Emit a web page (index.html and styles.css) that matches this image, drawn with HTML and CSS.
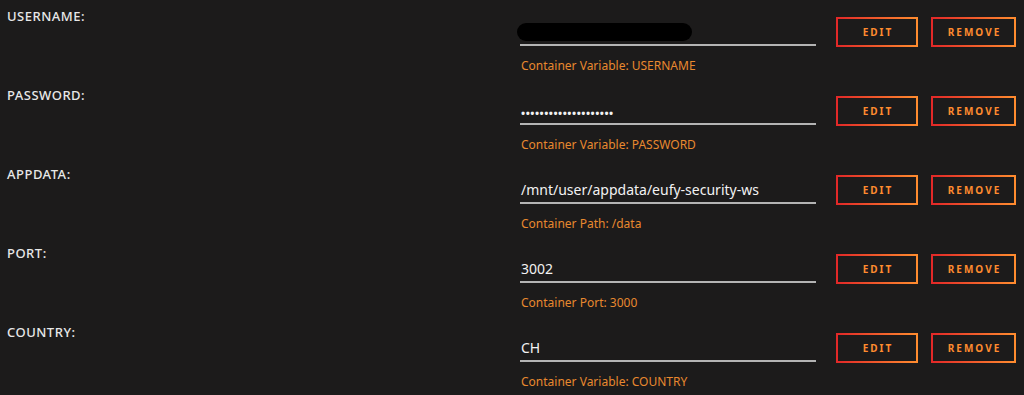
FILE: index.html
```html
<!DOCTYPE html>
<html>
<head>
<title>Container Settings</title>
<link rel="stylesheet" href="styles.css">
</head>
<body>

<div class="setting">
  <div class="setting-name">USERNAME:</div>
  <div class="setting-field">
    <div class="setting-input"><span class="redacted"></span></div>
    <div class="setting-hint">Container Variable: USERNAME</div>
  </div>
  <div class="setting-actions">
    <button class="btn btn-edit">EDIT</button>
    <button class="btn btn-remove">REMOVE</button>
  </div>
</div>

<div class="setting">
  <div class="setting-name">PASSWORD:</div>
  <div class="setting-field">
    <div class="setting-input"><span class="dots">••••••••••••••••••••</span></div>
    <div class="setting-hint">Container Variable: PASSWORD</div>
  </div>
  <div class="setting-actions">
    <button class="btn btn-edit">EDIT</button>
    <button class="btn btn-remove">REMOVE</button>
  </div>
</div>

<div class="setting">
  <div class="setting-name">APPDATA:</div>
  <div class="setting-field">
    <div class="setting-input">/mnt/user/appdata/eufy-security-ws</div>
    <div class="setting-hint">Container Path: /data</div>
  </div>
  <div class="setting-actions">
    <button class="btn btn-edit">EDIT</button>
    <button class="btn btn-remove">REMOVE</button>
  </div>
</div>

<div class="setting">
  <div class="setting-name">PORT:</div>
  <div class="setting-field">
    <div class="setting-input">3002</div>
    <div class="setting-hint">Container Port: 3000</div>
  </div>
  <div class="setting-actions">
    <button class="btn btn-edit">EDIT</button>
    <button class="btn btn-remove">REMOVE</button>
  </div>
</div>

<div class="setting">
  <div class="setting-name">COUNTRY:</div>
  <div class="setting-field">
    <div class="setting-input">CH</div>
    <div class="setting-hint">Container Variable: COUNTRY</div>
  </div>
  <div class="setting-actions">
    <button class="btn btn-edit">EDIT</button>
    <button class="btn btn-remove">REMOVE</button>
  </div>
</div>

</body>
</html>
```

FILE: styles.css
```css
body {
  margin: 0;
  background-color: #1c1b1b;
  font-family: "Noto Sans", "Open Sans", sans-serif;
  color: #f2f2f2;
  overflow: hidden;
}

.setting {
  display: flex;
  height: 79px;
  padding-left: 7px;
}

.setting-name {
  width: 513px;
  padding-top: 8px;
  font-size: 13px;
  line-height: 16px;
  font-weight: 500;
  letter-spacing: 0.5px;
  color: #e8e8e8;
}

.setting-field {
  width: 296px;
  padding-top: 17px;
}

.setting-input {
  box-sizing: border-box;
  height: 29px;
  padding: 5px 0 0 1px;
  border-bottom: 2px solid #b4b4b4;
  font-size: 14px;
  line-height: 20px;
}

.redacted {
  display: block;
  width: 175px;
  height: 18px;
  margin: 1px 0 0 -4px;
  border-radius: 9px;
  background-color: #000;
}

.dots {
  font-size: 11px;
  font-weight: 700;
  letter-spacing: 0.5px;
  position: relative;
  top: 1px;
}

.setting-hint {
  margin-top: 12px;
  padding-left: 1px;
  font-size: 12px;
  line-height: 16px;
  color: #e8892f;
}

.setting-actions {
  display: flex;
  gap: 13px;
  margin-left: 20px;
  padding-top: 17px;
  align-items: flex-start;
}

.btn {
  height: 30px;
  padding: 0;
  background: transparent;
  border: 2px solid;
  border-image: linear-gradient(90deg, #e22828, #ff8c2f) 1;
  color: #ff8c2f;
  font-family: "Noto Sans", sans-serif;
  font-size: 10px;
  font-weight: 700;
  letter-spacing: 2px;
  text-indent: 2px;
}

.btn-edit {
  width: 82px;
}

.btn-remove {
  width: 85px;
}
```
